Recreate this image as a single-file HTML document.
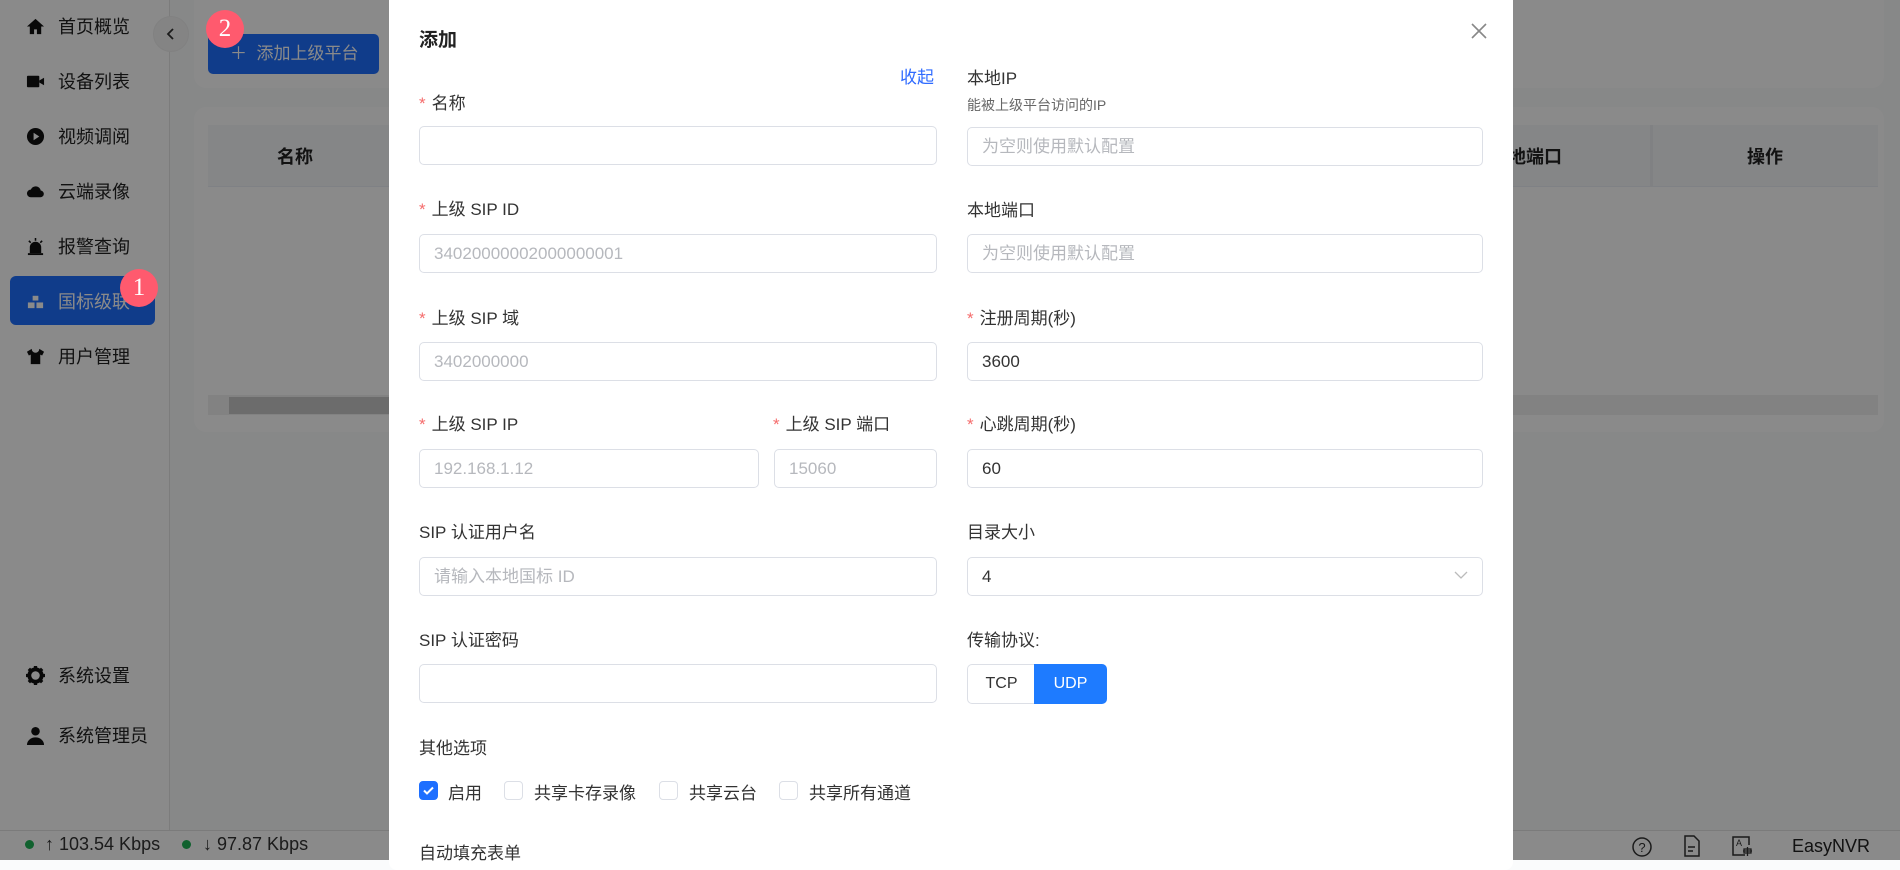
<!DOCTYPE html>
<html><head><meta charset="utf-8">
<style>
*{box-sizing:border-box;margin:0;padding:0}
body{width:1900px;height:860px;position:relative;overflow:hidden;background:#fafbfc;font-family:"Liberation Sans","Noto Sans CJK SC",sans-serif;color:#303133}
.a{position:absolute}
.nav{position:absolute;left:24px;font-size:18px;color:#222;display:flex;align-items:center;height:30px}
.nav svg{width:19px;height:19px;margin-right:13px;margin-left:2px}
.badge{position:absolute;width:38px;height:38px;border-radius:50%;background:#ff5a6e;color:#fff;font-family:"Liberation Serif",serif;font-size:25px;text-align:center;line-height:38px}
.ov{position:absolute;left:0;top:0;width:1900px;height:860px;background:rgba(0,0,0,.46)}
.lbl{position:absolute;font-size:17px;color:#333;line-height:22px}
.lbl i{color:#f56c6c;font-style:normal;margin-right:6px}
.inp{position:absolute;height:39px;border:1px solid #dcdfe6;border-radius:5px;background:#fff;font-size:17px;line-height:37px;padding-left:14px;color:#333}
.ph{color:#b6b8bd}
.cb{position:absolute;top:781px;width:19px;height:19px;border:1px solid #dcdfe6;border-radius:4px;background:#fff}
.ct{position:absolute;top:779px;font-size:17px;color:#333}
</style></head><body>
<!-- sidebar -->
<div class="a" style="left:0;top:0;width:170px;height:830px;background:#fff;border-right:1px solid #e6e6e6"></div>
<div class="a" style="left:10px;top:276px;width:145px;height:49px;background:#1e6fff;border-radius:6px"></div>
<div class="nav" style="top:11px"><svg viewBox="0 0 20 20"><path d="M10 2L1 10h3v8h4.5v-5h3v5H16v-8h3z" fill="#111"/></svg>首页概览</div>
<div class="nav" style="top:66px"><svg viewBox="0 0 20 20"><rect x="1" y="4" width="13" height="12" rx="1" fill="#111"/><path d="M14 9l5-3v8l-5-3z" fill="#111"/></svg>设备列表</div>
<div class="nav" style="top:121px"><svg viewBox="0 0 20 20"><circle cx="10" cy="10" r="9" fill="#111"/><path d="M8 6l6 4-6 4z" fill="#fff"/></svg>视频调阅</div>
<div class="nav" style="top:176px"><svg viewBox="0 0 20 20"><path d="M5 16a4 4 0 010-8 5.5 5.5 0 0110.5 1A3.5 3.5 0 0115 16z" fill="#111"/></svg>云端录像</div>
<div class="nav" style="top:231px"><svg viewBox="0 0 20 20"><path d="M4 17v-6a6 6 0 0112 0v6z" fill="#111"/><rect x="2" y="17" width="16" height="2" fill="#111"/><path d="M10 1v3M3 4l2 2M17 4l-2 2" stroke="#111" stroke-width="1.6"/></svg>报警查询</div>
<div class="nav" style="top:286px;color:#fff"><svg viewBox="0 0 20 20"><rect x="7" y="4" width="6" height="5" fill="#fff"/><rect x="2" y="11" width="7" height="6" fill="#fff"/><rect x="11" y="11" width="7" height="6" fill="#fff"/></svg>国标级联</div>
<div class="nav" style="top:341px"><svg viewBox="0 0 20 20"><path d="M6 2L1 5l2 4 2-1v10h10V8l2 1 2-4-5-3a4 4 0 01-8 0z" fill="#111"/></svg>用户管理</div>
<div class="nav" style="top:660px"><svg viewBox="0 0 20 20"><circle cx="10" cy="10" r="6.5" fill="none" stroke="#111" stroke-width="4"/><path d="M10 0v5M10 15v5M0 10h5M15 10h5M3 3l3.5 3.5M13.5 13.5L17 17M17 3l-3.5 3.5M6.5 13.5L3 17" stroke="#111" stroke-width="3.5"/></svg>系统设置</div>
<div class="nav" style="top:720px"><svg viewBox="0 0 20 20"><circle cx="10" cy="5.5" r="4.5" fill="#111"/><path d="M1 20a9 8 0 0118 0z" fill="#111"/></svg>系统管理员</div>
<div class="a" style="left:153px;top:16px;width:36px;height:36px;border-radius:50%;background:#f4f4f4;border:1px solid #eee"></div>
<svg class="a" style="left:164px;top:27px" width="14" height="14" viewBox="0 0 14 14"><path d="M9 2L4 7l5 5" stroke="#333" stroke-width="1.8" fill="none"/></svg>
<!-- top card -->
<div class="a" style="left:194px;top:-10px;width:1690px;height:98px;background:#fff;border-radius:12px"></div>
<div class="a" style="left:208px;top:34px;width:171px;height:40px;background:#1e6fff;border-radius:5px;color:#fff;font-size:17px;line-height:40px;padding-left:22px">＋&nbsp; 添加上级平台</div>
<!-- table card -->
<div class="a" style="left:194px;top:107px;width:1690px;height:325px;background:#fff;border-radius:12px"></div>
<div class="a" style="left:208px;top:125px;width:1670px;height:62px;background:#f5f7fa;border-bottom:1px solid #ebeef5"></div>
<div class="a" style="left:277px;top:143px;font-size:18px;font-weight:bold;color:#222">名称</div>
<div class="a" style="left:1508px;top:143px;font-size:18px;font-weight:bold;color:#222">地端口</div>
<div class="a" style="left:1747px;top:143px;font-size:18px;font-weight:bold;color:#222">操作</div>
<div class="a" style="left:1650px;top:125px;width:3px;height:62px;background:#eceef2"></div>
<div class="a" style="left:208px;top:395px;width:1670px;height:20px;background:#f1f1f1"></div>
<div class="a" style="left:229px;top:397px;width:500px;height:17px;background:#c8c8c8"></div>
<!-- footer -->
<div class="a" style="left:0;top:830px;width:1900px;height:30px;background:#fff;border-top:1px solid #e4e4e4"></div>
<div class="a" style="left:25px;top:840px;width:9px;height:9px;border-radius:50%;background:#1fb356"></div>
<div class="a" style="left:45px;top:834px;font-size:18px;color:#333">↑ 103.54 Kbps</div>
<div class="a" style="left:182px;top:840px;width:9px;height:9px;border-radius:50%;background:#1fb356"></div>
<div class="a" style="left:203px;top:834px;font-size:18px;color:#333">↓ 97.87 Kbps</div>
<svg class="a" style="left:1631px;top:836px" width="22" height="22" viewBox="0 0 22 22"><circle cx="11" cy="11" r="9" fill="none" stroke="#333" stroke-width="1.5"/><text x="11" y="16" font-size="13" text-anchor="middle" fill="#333" font-family="Liberation Sans">?</text></svg>
<svg class="a" style="left:1683px;top:835px" width="18" height="22" viewBox="0 0 18 22"><path d="M2 1h9l5 5v15H2z" fill="none" stroke="#333" stroke-width="1.5"/><path d="M5 12h7M5 16h5" stroke="#333" stroke-width="1.5"/></svg>
<svg class="a" style="left:1731px;top:835px" width="22" height="22" viewBox="0 0 22 22"><path d="M14 20H2V2h16v8" fill="none" stroke="#333" stroke-width="1.5"/><text x="5" y="11" font-size="9" fill="#333" font-family="Liberation Sans">A</text><path d="M12 16h9M16.5 12v9M13 14h7v4h-7z" stroke="#333" stroke-width="1.3" fill="none"/></svg>
<div class="a" style="left:1792px;top:836px;font-size:18px;color:#222">EasyNVR</div>
<!-- overlay -->
<div class="ov"></div>
<div class="badge" style="left:206px;top:10px">2</div>
<div class="badge" style="left:120px;top:269px">1</div>
<!-- modal -->
<div class="a" style="left:389px;top:-10px;width:1124px;height:880px;background:#fff;border-radius:8px"></div>
<div class="a" style="left:419px;top:25px;font-size:19px;font-weight:bold;color:#222">添加</div>
<svg class="a" style="left:1470px;top:22px" width="18" height="18" viewBox="0 0 18 18"><path d="M2 2l14 14M16 2L2 16" stroke="#888" stroke-width="1.6"/></svg>
<div class="a" style="left:900px;top:63px;font-size:17px;color:#2f6bff">收起</div>
<!-- left col -->
<div class="lbl" style="left:419px;top:93px"><i>*</i>名称</div>
<div class="inp" style="left:419px;top:126px;width:518px"></div>
<div class="lbl" style="left:419px;top:199px"><i>*</i>上级 SIP ID</div>
<div class="inp ph" style="left:419px;top:234px;width:518px">34020000002000000001</div>
<div class="lbl" style="left:419px;top:308px"><i>*</i>上级 SIP 域</div>
<div class="inp ph" style="left:419px;top:342px;width:518px">3402000000</div>
<div class="lbl" style="left:419px;top:414px"><i>*</i>上级 SIP IP</div>
<div class="inp ph" style="left:419px;top:449px;width:340px">192.168.1.12</div>
<div class="lbl" style="left:773px;top:414px"><i>*</i>上级 SIP 端口</div>
<div class="inp ph" style="left:774px;top:449px;width:163px">15060</div>
<div class="lbl" style="left:419px;top:522px">SIP 认证用户名</div>
<div class="inp ph" style="left:419px;top:557px;width:518px">请输入本地国标 ID</div>
<div class="lbl" style="left:419px;top:630px">SIP 认证密码</div>
<div class="inp" style="left:419px;top:664px;width:518px"></div>
<div class="lbl" style="left:419px;top:738px">其他选项</div>
<div class="cb" style="left:419px;background:#1e6fff;border-color:#1e6fff"><svg width="17" height="17" viewBox="0 0 17 17"><path d="M4 8.5l3 3 6-6" stroke="#fff" stroke-width="2" fill="none"/></svg></div>
<div class="ct" style="left:448px">启用</div>
<div class="cb" style="left:504px"></div><div class="ct" style="left:534px">共享卡存录像</div>
<div class="cb" style="left:659px"></div><div class="ct" style="left:689px">共享云台</div>
<div class="cb" style="left:779px"></div><div class="ct" style="left:809px">共享所有通道</div>
<div class="lbl" style="left:419px;top:843px">自动填充表单</div>
<!-- right col -->
<div class="lbl" style="left:967px;top:68px">本地IP</div>
<div class="a" style="left:967px;top:95px;font-size:14px;color:#666">能被上级平台访问的IP</div>
<div class="inp ph" style="left:967px;top:127px;width:516px">为空则使用默认配置</div>
<div class="lbl" style="left:967px;top:200px">本地端口</div>
<div class="inp ph" style="left:967px;top:234px;width:516px">为空则使用默认配置</div>
<div class="lbl" style="left:967px;top:308px"><i>*</i>注册周期(秒)</div>
<div class="inp" style="left:967px;top:342px;width:516px">3600</div>
<div class="lbl" style="left:967px;top:414px"><i>*</i>心跳周期(秒)</div>
<div class="inp" style="left:967px;top:449px;width:516px">60</div>
<div class="lbl" style="left:967px;top:522px">目录大小</div>
<div class="inp" style="left:967px;top:557px;width:516px">4</div>
<svg class="a" style="left:1453px;top:569px" width="16" height="12" viewBox="0 0 16 12"><path d="M2 3l6 6 6-6" stroke="#bbb" stroke-width="1.3" fill="none"/></svg>
<div class="lbl" style="left:967px;top:630px">传输协议:</div>
<div class="a" style="left:967px;top:664px;width:68px;height:40px;border:1px solid #dcdfe6;border-right:none;border-radius:5px 0 0 5px;font-size:16px;line-height:38px;text-align:center;color:#333">TCP</div>
<div class="a" style="left:1034px;top:664px;width:73px;height:40px;background:#1e7bff;border-radius:0 5px 5px 0;font-size:16px;line-height:40px;text-align:center;color:#fff">UDP</div>
</body></html>
